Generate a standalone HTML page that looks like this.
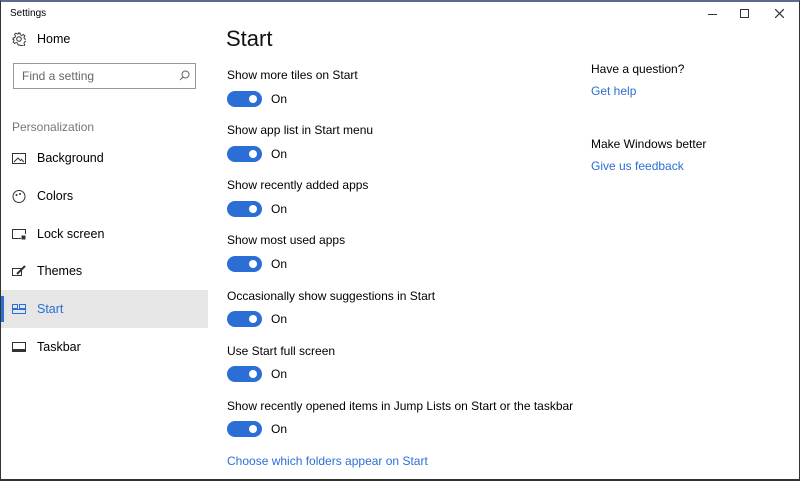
<!DOCTYPE html>
<html><head><meta charset="utf-8"><style>
*{margin:0;padding:0;box-sizing:border-box}
body{width:800px;height:481px;overflow:hidden;background:#fff;font-family:"Liberation Sans",sans-serif;color:#000;position:relative}
.win{position:absolute;left:0;top:0;width:800px;height:481px;border:1px solid #333;border-top:2px solid #5a6b8c;border-bottom:2px solid #333}
.t{position:absolute;white-space:nowrap;line-height:1}
.nav{font-size:12.5px;left:37px}
.ico{position:absolute;left:12px}
.lab{font-size:12px;left:227px}
.tog{position:absolute;left:227px;width:35px;height:16px;border-radius:8px;background:#2b6fd6}
.tog::after{content:"";position:absolute;right:5px;top:4px;width:8px;height:8px;border-radius:50%;background:#fff}
.on{font-size:12px;left:271px}
.link{color:#2b6fd6}
</style></head><body>
<div class="win"></div>
<div class="t" style="left:10px;top:9px;font-size:10px">Settings</div>
<div class="t" style="left:708px;top:14px;width:9px;height:0;border-top:1px solid #333"></div>
<div class="t" style="left:740px;top:9px;width:9px;height:9px;border:1px solid #333"></div>
<svg class="t" style="left:775px;top:9px" width="9" height="9"><path d="M0 0L9 9M9 0L0 9" stroke="#333" stroke-width="1.2"/></svg>
<svg class="ico" style="top:32px" width="14" height="14" viewBox="0 0 14 14"><circle cx="7" cy="7" r="2.3" fill="none" stroke="#333"/><path d="M6 1h2l.4 1.8 1.5.7 1.6-1 1.4 1.4-1 1.6.7 1.5 1.8.4v2l-1.8.4-.7 1.5 1 1.6-1.4 1.4-1.6-1-1.5.7L8 13H6l-.4-1.8-1.5-.7-1.6 1-1.4-1.4 1-1.6-.7-1.5L1 8V6l1.8-.4.7-1.5-1-1.6 1.4-1.4 1.6 1 1.5-.7z" fill="none" stroke="#333" stroke-width=".9"/></svg>
<div class="t nav" style="top:33px">Home</div>
<div class="t" style="left:13px;top:63px;width:183px;height:26px;border:1px solid #999"></div>
<div class="t" style="left:22px;top:70px;font-size:12px;color:#666">Find a setting</div>
<svg class="t" style="left:179px;top:70px" width="11" height="11"><circle cx="6.5" cy="4.5" r="3.5" fill="none" stroke="#666"/><path d="M4 7L1 10" stroke="#666"/></svg>
<div class="t" style="left:12px;top:121px;font-size:12px;color:#777">Personalization</div>
<svg class="ico" style="top:153px" width="14" height="11"><rect x="0.5" y="0.5" width="13" height="10" fill="none" stroke="#333"/><path d="M2 9 L6 5 L9 8 M9 6 L12 9" stroke="#333" fill="none"/></svg>
<div class="t nav" style="top:152px">Background</div>
<svg class="ico" style="top:190px" width="14" height="13"><circle cx="7" cy="6.5" r="6" fill="none" stroke="#333"/><circle cx="4.5" cy="5" r="1" fill="#333"/><circle cx="8" cy="4" r="1" fill="#333"/></svg>
<div class="t nav" style="top:190px">Colors</div>
<svg class="ico" style="top:229px" width="14" height="11"><path d="M9 9.5 H0.5 V0.5 H13.5 V5" stroke="#333" fill="none"/><rect x="9.5" y="6.5" width="4" height="4" fill="#333"/></svg>
<div class="t nav" style="top:228px">Lock screen</div>
<svg class="ico" style="top:265px" width="14" height="12"><rect x="0.5" y="3.5" width="9" height="7" fill="none" stroke="#333"/><path d="M5 9 L13 1" stroke="#333" stroke-width="2"/></svg>
<div class="t nav" style="top:265px">Themes</div>
<div class="t" style="left:1px;top:290px;width:207px;height:38px;background:#e6e6e6"></div>
<div class="t" style="left:1px;top:296px;width:3px;height:26px;background:#2b6fd6"></div>
<svg class="ico" style="top:304px" width="14" height="10"><rect x="0.5" y="0.5" width="5" height="4" fill="none" stroke="#2b6fd6"/><rect x="7.5" y="0.5" width="6" height="4" fill="none" stroke="#2b6fd6"/><rect x="0.5" y="5.5" width="13" height="4" fill="none" stroke="#2b6fd6"/></svg>
<div class="t nav" style="top:303px;color:#2b6fd6">Start</div>
<svg class="ico" style="top:342px" width="14" height="10"><rect x="0.5" y="0.5" width="13" height="9" fill="none" stroke="#333"/><rect x="1" y="7" width="12" height="2" fill="#333"/></svg>
<div class="t nav" style="top:341px">Taskbar</div>

<div class="t" style="left:226px;top:28px;font-size:22px;color:#111">Start</div>

<div class="t lab" style="top:69px">Show more tiles on Start</div>
<div class="tog" style="top:91px"></div><div class="t on" style="top:93px">On</div>
<div class="t lab" style="top:124px">Show app list in Start menu</div>
<div class="tog" style="top:146px"></div><div class="t on" style="top:148px">On</div>
<div class="t lab" style="top:179px">Show recently added apps</div>
<div class="tog" style="top:201px"></div><div class="t on" style="top:203px">On</div>
<div class="t lab" style="top:234px">Show most used apps</div>
<div class="tog" style="top:256px"></div><div class="t on" style="top:258px">On</div>
<div class="t lab" style="top:290px">Occasionally show suggestions in Start</div>
<div class="tog" style="top:311px"></div><div class="t on" style="top:313px">On</div>
<div class="t lab" style="top:345px">Use Start full screen</div>
<div class="tog" style="top:366px"></div><div class="t on" style="top:368px">On</div>
<div class="t lab" style="top:400px">Show recently opened items in Jump Lists on Start or the taskbar</div>
<div class="tog" style="top:421px"></div><div class="t on" style="top:423px">On</div>
<div class="t lab link" style="top:455px">Choose which folders appear on Start</div>

<div class="t" style="left:591px;top:63px;font-size:12px">Have a question?</div>
<div class="t link" style="left:591px;top:85px;font-size:12px">Get help</div>
<div class="t" style="left:591px;top:138px;font-size:12px">Make Windows better</div>
<div class="t link" style="left:591px;top:160px;font-size:12px">Give us feedback</div>
</body></html>
